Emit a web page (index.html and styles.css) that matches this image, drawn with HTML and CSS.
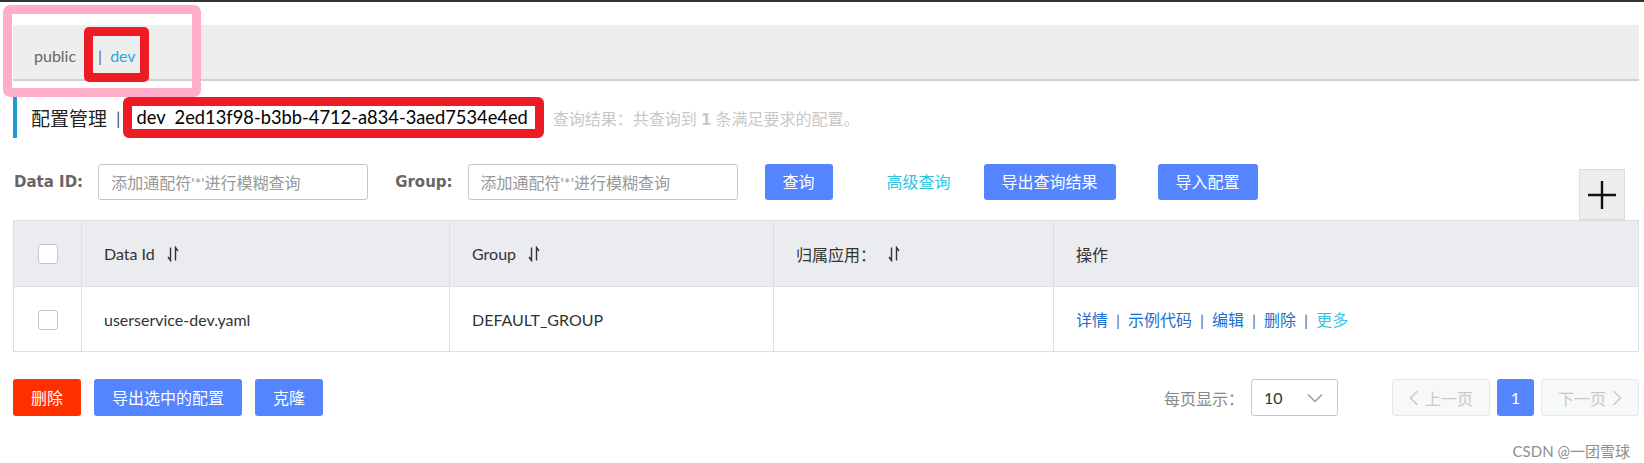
FILE: index.html
```html
<!DOCTYPE html>
<html lang="zh-CN">
<head>
<meta charset="utf-8">
<title>配置管理</title>
<link rel="stylesheet" href="styles.css">
</head>
<body>
<div class="topline"></div>
<div class="page">
  <div class="ns-bar">
    <span class="ns">public</span>
    <span class="ns-sep">|</span>
    <span class="ns ns-active">dev</span>
  </div>

  <div class="title-row">
    <span class="title">配置管理</span>
    <span class="title-sep">|</span>
    <span class="ns-id">dev&nbsp;&nbsp;2ed13f98-b3bb-4712-a834-3aed7534e4ed</span>
    <span class="result">查询结果：共查询到 <strong>1</strong> 条满足要求的配置。</span>
  </div>

  <div class="search-row">
    <span class="field-label">Data ID:</span>
    <input class="field-input" type="text" placeholder="添加通配符'*'进行模糊查询">
    <span class="field-label label-group">Group:</span>
    <input class="field-input" type="text" placeholder="添加通配符'*'进行模糊查询">
    <button class="btn btn-primary btn-query">查询</button>
    <a class="link-adv">高级查询</a>
    <button class="btn btn-primary btn-export">导出查询结果</button>
    <button class="btn btn-primary btn-import">导入配置</button>
    <div class="add-box">
      <svg width="30" height="30" viewBox="0 0 30 30"><path d="M15 1V29M1 15H29" stroke="#111" stroke-width="2.4" fill="none"/></svg>
    </div>
  </div>

  <table class="cfg-table">
    <colgroup>
      <col class="c-check"><col class="c-id"><col class="c-group"><col class="c-app"><col>
    </colgroup>
    <thead>
      <tr>
        <th class="cell-check"><span class="checkbox"></span></th>
        <th><span class="th-inner">Data Id<svg class="sort" width="12" height="16" viewBox="0 0 12 16"><path d="M3.5 1.5V14.5L1 11M8.5 14.5V1.5L11 5" stroke="#333" stroke-width="1.4" fill="none"/></svg></span></th>
        <th><span class="th-inner">Group<svg class="sort" width="12" height="16" viewBox="0 0 12 16"><path d="M3.5 1.5V14.5L1 11M8.5 14.5V1.5L11 5" stroke="#333" stroke-width="1.4" fill="none"/></svg></span></th>
        <th><span class="th-inner">归属应用：<svg class="sort" width="12" height="16" viewBox="0 0 12 16"><path d="M3.5 1.5V14.5L1 11M8.5 14.5V1.5L11 5" stroke="#333" stroke-width="1.4" fill="none"/></svg></span></th>
        <th>操作</th>
      </tr>
    </thead>
    <tbody>
      <tr>
        <td class="cell-check"><span class="checkbox"></span></td>
        <td>userservice-dev.yaml</td>
        <td>DEFAULT_GROUP</td>
        <td></td>
        <td class="ops"><a class="op">详情</a><span class="op-sep">|</span><a class="op">示例代码</a><span class="op-sep">|</span><a class="op">编辑</a><span class="op-sep">|</span><a class="op">删除</a><span class="op-sep">|</span><a class="op op-more">更多</a></td>
      </tr>
    </tbody>
  </table>

  <div class="footer">
    <div class="footer-left">
      <button class="btn btn-danger">删除</button>
      <button class="btn btn-primary">导出选中的配置</button>
      <button class="btn btn-primary">克隆</button>
    </div>
    <div class="footer-right">
      <span class="page-size-label">每页显示：</span>
      <div class="select">
        <span>10</span>
        <svg width="16" height="10" viewBox="0 0 16 10"><path d="M1 1.5L8 8.5L15 1.5" stroke="#999" stroke-width="1.4" fill="none"/></svg>
      </div>
      <div class="pager">
        <span class="pg pg-disabled"><svg width="10" height="16" viewBox="0 0 10 16"><path d="M8.5 1L1.5 8L8.5 15" stroke="#c8c8c8" stroke-width="1.4" fill="none"/></svg>上一页</span>
        <span class="pg pg-current">1</span>
        <span class="pg pg-disabled">下一页<svg width="10" height="16" viewBox="0 0 10 16"><path d="M1.5 1L8.5 8L1.5 15" stroke="#c8c8c8" stroke-width="1.4" fill="none"/></svg></span>
      </div>
    </div>
  </div>
</div>

<div class="mark-pink"></div>
<div class="mark-red"></div>
<div class="watermark">CSDN @一团雪球</div>
</body>
</html>
```

FILE: styles.css
```css
* { box-sizing: border-box; }

body {
  margin: 0;
  font-family: "Lato", "Noto Sans CJK SC", sans-serif;
  font-size: 16px;
  color: #333;
  background: #fff;
  position: relative;
  height: 463px;
  overflow: hidden;
}

.topline {
  height: 2px;
  background: #333;
}

.page {
  padding: 0 5px 0 13px;
}

/* namespace bar */
.ns-bar {
  margin-top: 23px;
  height: 56px;
  background: #eee;
  border-bottom: 2px solid #d0d0d0;
  display: flex;
  align-items: center;
  padding: 6px 0 0 21px;
}
.ns { color: #666; }
.ns-sep { color: #666; margin: 0 8px 0 22px; }
.ns-active { color: #2aa9dc; }

/* title */
.title-row {
  margin-top: 16px;
  height: 41px;
  display: flex;
  align-items: center;
  border-left: 4px solid #1b9bd7;
}
.title {
  margin-left: 14px;
  font-size: 19px;
  color: #222;
}
.title-sep {
  font-size: 18px;
  color: #555;
  margin: 0 2px 0 9px;
}
.ns-id {
  display: inline-block;
  border: 9px solid #ed1c24;
  border-radius: 6px;
  background: #fff;
  padding: 0 7px 0 5px;
  font-size: 18.3px;
  line-height: 23px;
  color: #000;
}
.result {
  margin-left: 9px;
  color: #c8c8c8;
  font-size: 16px;
}
.result strong { font-family: "DejaVu Sans", sans-serif; font-size: 15px; }

/* search row */
.search-row {
  margin-top: 26px;
  height: 56px;
  display: flex;
  align-items: flex-start;
}
.field-label {
  font-family: "DejaVu Sans", sans-serif;
  font-weight: bold;
  font-size: 15px;
  color: #666;
  line-height: 36px;
  margin-left: 1px;
}
.label-group { margin-left: 27px; }
.field-input {
  margin-left: 15px;
  width: 270px;
  height: 36px;
  border: 1px solid #c4c6cf;
  border-radius: 3px;
  padding: 0 12px;
  font-family: inherit;
  font-size: 16px;
  color: #333;
  outline: none;
}
.field-input::placeholder { color: #999; }

.btn {
  height: 36px;
  padding: 0 18px;
  border: none;
  border-radius: 3px;
  font-family: inherit;
  font-size: 16px;
  color: #fff;
  line-height: 36px;
}
.btn-primary { background: #5584ff; }
.btn-danger { background: #ff3000; }
.btn-query { margin-left: 27px; }
.link-adv {
  margin-left: 54px;
  line-height: 36px;
  color: #33c3e3;
}
.btn-export { margin-left: 33px; }
.btn-import { margin-left: 42px; }

.add-box {
  margin-left: auto;
  margin-right: 14px;
  margin-top: 5px;
  width: 46px;
  height: 51px;
  background: #eee;
  border: 1px solid #ddd;
  display: flex;
  align-items: center;
  justify-content: center;
}

/* table */
.cfg-table {
  width: 100%;
  border-collapse: collapse;
  table-layout: fixed;
  border: 1px solid #dcdee3;
}
.c-check { width: 68px; }
.c-id { width: 368px; }
.c-group { width: 324px; }
.c-app { width: 280px; }
.cfg-table th,
.cfg-table td {
  border: 1px solid #dcdee3;
  padding: 0 0 0 22px;
  text-align: left;
  font-weight: normal;
  color: #333;
}
.cfg-table th {
  height: 66px;
  background: #ebecf0;
}
.cfg-table td {
  height: 65px;
}
.cfg-table .cell-check {
  padding: 0;
  text-align: center;
}
.checkbox {
  display: inline-block;
  width: 20px;
  height: 20px;
  border: 1px solid #c4c6cf;
  border-radius: 3px;
  background: #fff;
  vertical-align: middle;
}
.th-inner {
  display: inline-flex;
  align-items: center;
}
.sort { margin-left: 12px; }

.ops .op { color: #1b6fd0; }
.ops .op-more { color: #33c3e3; }
.op-sep { color: #666; margin: 0 8px; }

/* footer */
.footer {
  margin-top: 27px;
  display: flex;
  justify-content: space-between;
  align-items: center;
}
.footer-left {
  display: flex;
  gap: 13px;
}
.footer-left .btn { height: 37px; }
.footer-right {
  display: flex;
  align-items: center;
}
.page-size-label { color: #888; }
.select {
  margin-left: 7px;
  width: 87px;
  height: 37px;
  border: 1px solid #c4c6cf;
  border-radius: 3px;
  display: flex;
  align-items: center;
  justify-content: space-between;
  padding: 0 14px 0 12px;
  color: #333;
}
.pager {
  margin-left: 54px;
  display: flex;
  gap: 7px;
}
.pg {
  height: 37px;
  display: flex;
  align-items: center;
  justify-content: center;
  border-radius: 3px;
}
.pg-disabled {
  width: 98px;
  background: #f7f8fa;
  border: 1px solid #e6e7eb;
  color: #c8c8c8;
  gap: 6px;
}
.pg-current {
  width: 37px;
  background: #5584ff;
  color: #fff;
}

/* annotation marks drawn over the screenshot */
.mark-pink {
  position: absolute;
  left: 3px;
  top: 5px;
  width: 198px;
  height: 92px;
  border: 9px solid #ffaec9;
  border-radius: 7px;
}
.mark-red {
  position: absolute;
  left: 84px;
  top: 27px;
  width: 65px;
  height: 55px;
  border: 9px solid #ed1c24;
  border-radius: 5px;
}

.watermark {
  position: absolute;
  right: 14px;
  bottom: 2px;
  font-size: 15px;
  color: #8e8e8e;
}
```
